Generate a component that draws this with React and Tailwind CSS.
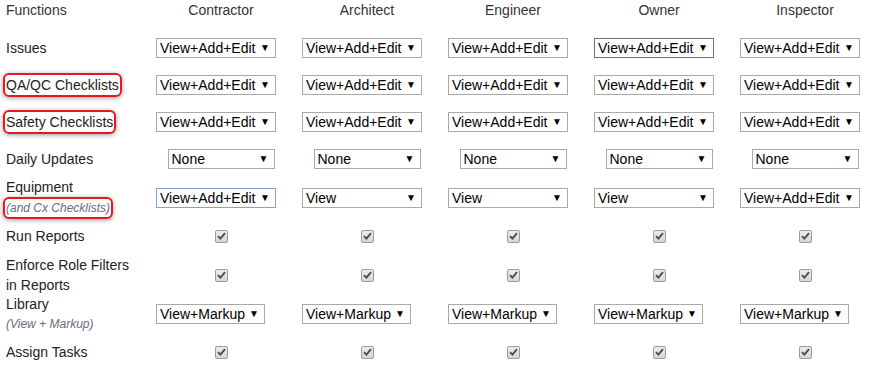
const roles = ["Contractor", "Architect", "Engineer", "Owner", "Inspector"];

const rows = [
  { label: "Issues", h: "h-[37px]", kind: "select", values: ["View+Add+Edit", "View+Add+Edit", "View+Add+Edit", "View+Add+Edit", "View+Add+Edit"], dark: 3 },
  { label: "QA/QC Checklists", boxed: true, h: "h-[37px]", kind: "select", values: ["View+Add+Edit", "View+Add+Edit", "View+Add+Edit", "View+Add+Edit", "View+Add+Edit"] },
  { label: "Safety Checklists", boxed: true, h: "h-[37px]", kind: "select", values: ["View+Add+Edit", "View+Add+Edit", "View+Add+Edit", "View+Add+Edit", "View+Add+Edit"] },
  { label: "Daily Updates", h: "h-[37px]", kind: "none", values: ["None", "None", "None", "None", "None"] },
  { label: "Equipment", sub: "(and Cx Checklists)", subBoxed: true, h: "h-[40px]", kind: "select", values: ["View+Add+Edit", "View", "View", "View", "View+Add+Edit"], focus: 0 },
  { label: "Run Reports", h: "h-[38px]", kind: "check" },
  { label: "Enforce Role Filters", label2: "in Reports", h: "h-[38px]", kind: "check" },
  { label: "Library", sub: "(View + Markup)", h: "h-[42px]", kind: "markup", values: ["View+Markup", "View+Markup", "View+Markup", "View+Markup", "View+Markup"] },
  { label: "Assign Tasks", h: "h-[34px]", kind: "check" },
];

function FakeSelect({ value, width, border }) {
  return (
    <div
      className={`flex h-[20px] items-center justify-between border bg-white pl-[3px] pr-[5px] text-[14px] leading-none text-black ${width} ${border}`}
    >
      <span>{value}</span>
      <span className="text-[10px] leading-none">▼</span>
    </div>
  );
}

function Check() {
  return (
    <div className="flex h-[13px] w-[13px] items-center justify-center rounded-[2px] border border-[#9c9c9c] bg-gradient-to-b from-[#ececec] to-[#d6d6d6]">
      <svg width="9" height="8" viewBox="0 0 9 8">
        <path d="M1 4.2 L3.4 6.6 L8 1.2" fill="none" stroke="#4a4a4a" strokeWidth="1.8" />
      </svg>
    </div>
  );
}

function Label({ row }) {
  const box = "-ml-[3px] rounded-[6px] border-2 border-[#e5191f] px-[1px] shadow-[0_1px_5px_rgba(0,0,0,0.4)]";
  return (
    <div className="flex flex-col pl-[6px] text-[#222]">
      {row.boxed ? (
        <span className={`self-start leading-5 ${box}`}>{row.label}</span>
      ) : (
        <span className="leading-5">{row.label}</span>
      )}
      {row.label2 && <span className="leading-5">{row.label2}</span>}
      {row.sub &&
        (row.subBoxed ? (
          <span className={`self-start text-[12px] italic leading-[18px] text-[#6b6b7b] ${box}`}>{row.sub}</span>
        ) : (
          <span className="text-[12px] italic leading-5 text-[#6b6b7b]">{row.sub}</span>
        ))}
    </div>
  );
}

function Cell({ row, i }) {
  let border = "border-[#a9a9a9]";
  if (row.dark === i) border = "border-[#6f6f6f]";
  if (row.focus === i) border = "border-[#7fa3e2]";

  if (row.kind === "check") {
    return (
      <div className="flex items-center justify-center">
        <Check />
      </div>
    );
  }
  if (row.kind === "none") {
    return (
      <div className="flex items-center justify-center">
        <FakeSelect value="None" width="w-[107px]" border={border} />
      </div>
    );
  }
  return (
    <div className="flex items-center pl-[8px]">
      <FakeSelect
        value={row.values[i]}
        width={row.kind === "markup" ? "w-[109px]" : "w-[120px]"}
        border={border}
      />
    </div>
  );
}

export default function App() {
  return (
    <div className="h-[369px] w-[877px] overflow-hidden bg-white font-['Liberation_Sans',Arial,sans-serif] text-[14px]">
      <div className="grid h-[29px] grid-cols-[148px_repeat(5,146px)] text-[#333]">
        <div className="pl-[6px] leading-5">Functions</div>
        {roles.map((r) => (
          <div key={r} className="text-center leading-5">
            {r}
          </div>
        ))}
      </div>
      {rows.map((row) => (
        <div key={row.label} className={`grid grid-cols-[148px_repeat(5,146px)] ${row.h}`}>
          <div className="flex items-center">
            <Label row={row} />
          </div>
          {roles.map((r, i) => (
            <Cell key={r} row={row} i={i} />
          ))}
        </div>
      ))}
    </div>
  );
}
